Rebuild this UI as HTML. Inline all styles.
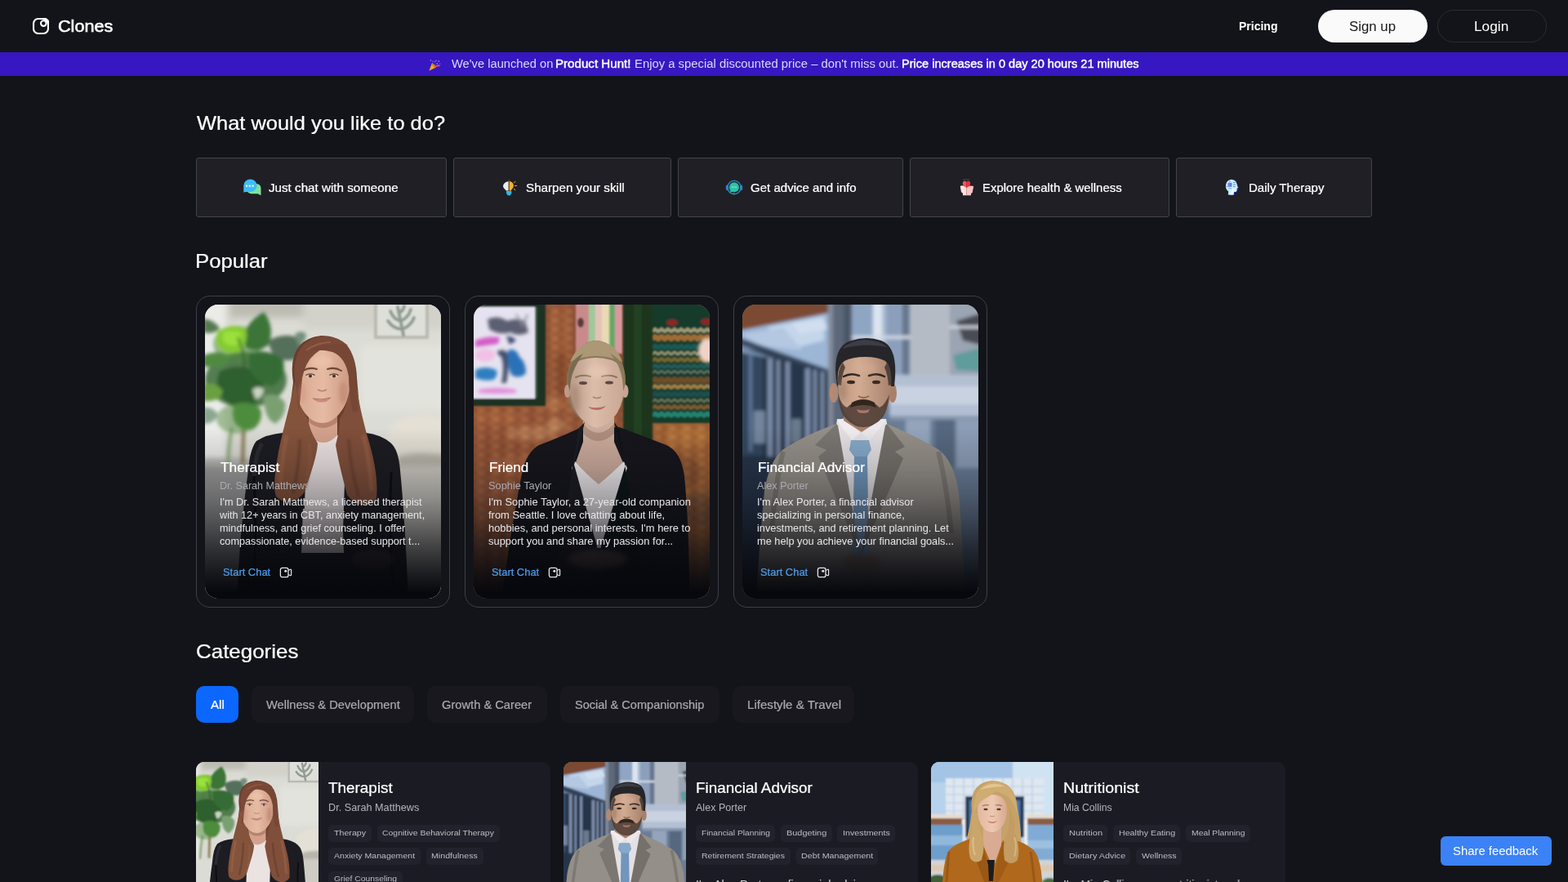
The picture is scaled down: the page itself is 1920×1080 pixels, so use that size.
<!DOCTYPE html>
<html lang="en">
<head>
<meta charset="utf-8">
<title>Clones</title>
<style>
*{box-sizing:border-box;margin:0;padding:0}
html,body{width:1920px;height:1080px;overflow:hidden;background:#131419;color:#fff;font-family:"Liberation Sans",sans-serif}
body{position:relative}
a{color:inherit;text-decoration:none}
button{font:inherit;color:inherit;border:0;background:none;display:block}
ul{list-style:none}
.t{position:absolute;white-space:nowrap;line-height:1;transform-origin:0 50%;font-weight:400;display:block;will-change:transform}
#nav{position:absolute;left:0;top:0;width:1920px;height:64px;background:#131419}
#logo{position:absolute;left:40px;top:22px;width:20px;height:20px}
.pill{position:absolute;top:12px;width:134px;height:40px;border-radius:20px;display:block}
#signup{left:1614px;background:#fafafa}
#login{left:1760px;border:1px solid #2b2b32}
#banner{position:absolute;left:0;top:64px;width:1920px;height:29px;background:#3617c1}
#banner .lt{color:#ddd6fb}
.h{color:#fff}
.act{position:absolute;top:193px;height:73px;border:1px solid #43444a;background:#201f26;border-radius:3px}
.ic{position:absolute}
.pc{position:absolute;top:362px;width:311px;height:382px;border:1px solid #3f4047;border-radius:17px;background:#131419}
.pc .img{position:absolute;left:10px;top:10px;width:289px;height:360px;border-radius:16px;overflow:hidden;background:#444}
.pc .img svg{position:absolute;left:0;top:0;width:289px;height:360px}
.pc .shade{position:absolute;left:0;top:0;width:289px;height:360px;background:linear-gradient(to bottom,rgba(7,8,13,0) 42%,rgba(7,8,13,.06) 47%,rgba(7,8,13,.14) 55%,rgba(7,8,13,.3) 65%,rgba(7,8,13,.48) 73%,rgba(7,8,13,.72) 83%,rgba(7,8,13,.9) 92%,rgba(7,8,13,1) 98%)}
.pc .role{color:#fff}
.pc .name{color:#a9aab0}
.pc .desc{line-height:16px;color:#e6e6e9}
.pc .start{color:#4f9cec}
.vid{position:absolute;width:16px;height:14px}
.tab{position:absolute;top:840px;height:45px;border-radius:10px;background:#18181e;color:#a9aab1}
.tab.on{background:#0b67fd;color:#fff}
.cc{position:absolute;top:933px;width:434px;height:216px;border-radius:10px;background:#1b1c23;overflow:hidden}
.cc .ph{position:absolute;left:0;top:0;width:150px;height:216px;overflow:hidden;background:#555}
.cc .ph svg{position:absolute;left:0;top:0;width:150px;height:216px}
.cc .role{color:#fff}
.cc .name{color:#b4b5bc}
.tag{position:absolute;height:20.400px;border-radius:5px;background:#21222b;color:#bcbdc4}
.cdesc{color:#d8d8dc}
#fb{position:absolute;left:1764px;top:1024px;width:136px;height:36px;border-radius:6px;background:#3b82f6;color:#fff}
.md{-webkit-text-stroke:.22px currentColor}
.cc .only-pop{display:none}
.sb{-webkit-text-stroke:.6px currentColor}
.sb2{-webkit-text-stroke:.4px currentColor}

</style>
</head>
<body>
<svg width="0" height="0" style="position:absolute" aria-hidden="true">
<defs>
<filter id="b05" x="-20%" y="-20%" width="140%" height="140%"><feGaussianBlur stdDeviation="0.5"/></filter>
<filter id="b1" x="-20%" y="-20%" width="140%" height="140%"><feGaussianBlur stdDeviation="1"/></filter>
<filter id="b2" x="-20%" y="-20%" width="140%" height="140%"><feGaussianBlur stdDeviation="2"/></filter>
<filter id="b3" x="-20%" y="-20%" width="140%" height="140%"><feGaussianBlur stdDeviation="3"/></filter>
<filter id="b5" x="-30%" y="-30%" width="160%" height="160%"><feGaussianBlur stdDeviation="5"/></filter>
<filter id="b8" x="-40%" y="-40%" width="180%" height="180%"><feGaussianBlur stdDeviation="8"/></filter>
<linearGradient id="hair1" x1="0" y1="0" x2="1" y2="0"><stop offset="0" stop-color="#6e4030"/><stop offset=".35" stop-color="#8f5a40"/><stop offset=".65" stop-color="#8a553c"/><stop offset="1" stop-color="#6a3e2f"/></linearGradient>
<linearGradient id="skin1" x1="0" y1="0" x2="1" y2="0"><stop offset="0" stop-color="#d9a78f"/><stop offset=".5" stop-color="#e6bba3"/><stop offset="1" stop-color="#cf9a84"/></linearGradient>
<linearGradient id="skin2" x1="0" y1="0" x2="1" y2="0"><stop offset="0" stop-color="#b89a88"/><stop offset=".45" stop-color="#dcbdaa"/><stop offset="1" stop-color="#c9a795"/></linearGradient>
<linearGradient id="skin3" x1="0" y1="0" x2="1" y2="0"><stop offset="0" stop-color="#c09880"/><stop offset=".4" stop-color="#d2ab92"/><stop offset="1" stop-color="#a8826c"/></linearGradient>
<linearGradient id="skin4" x1="0" y1="0" x2="1" y2="0"><stop offset="0" stop-color="#e2b89f"/><stop offset=".5" stop-color="#eec8b0"/><stop offset="1" stop-color="#d8a890"/></linearGradient>
<pattern id="brick" width="18" height="11" patternUnits="userSpaceOnUse"><rect width="18" height="11" fill="#7d4630"/><rect x="0.6" y="0.6" width="8" height="4.4" fill="#b06a42"/><rect x="9.6" y="0.6" width="8" height="4.4" fill="#95563a"/><rect x="5" y="6.100" width="8" height="4.400" fill="#c58658"/><rect x="14" y="6.100" width="8" height="4.400" fill="#8a4c30"/><rect x="-4" y="6.100" width="8" height="4.400" fill="#8a4c30"/></pattern>
</defs>
</svg>
<header id="nav">
<svg id="logo" viewBox="0 0 20 20" fill="none" stroke="#fff"><rect x="1.05" y="1.05" width="17.9" height="17.9" rx="5.6" stroke-width="2.1"/><path d="M13.4 1.05 A5.5 5.5 0 0 1 18.95 6.6" stroke-width="3.2"/><circle cx="13.3" cy="6.6" r="3.3" stroke-width="2.1"/></svg>
<a class="t sb" style="left:71.4px;top:22.27px;font-size:20px;transform:scaleX(1.08);">Clones</a>
<a class="t" style="left:1517.3px;top:24.95px;font-size:14px;font-weight:700;">Pricing</a>
<a id="signup" class="pill"><span class="t" style="left:37.9px;top:12.66px;font-size:16px;transform:scaleX(1.05);color:#18181b;">Sign up</span></a>
<a id="login" class="pill"><span class="t" style="left:44.1px;top:11.66px;font-size:16px;transform:scaleX(1.08);">Login</span></a>
</header>
<div id="banner">
<svg viewBox="0 0 18 18" style="position:absolute;left:524px;top:6px;width:18px;height:18px"><path d="M1.300 16.700 l3.700 -9.500 q3.500 1.200 5 5.300 z" fill="#f5a91e"/><path d="M5 7.200 q3.500 1.200 5 5.300 l-1.600 0.700 q-2 -3.200 -4 -4.400 z" fill="#c77a1a"/><path d="M9.500 11.200 q2.500 -1.200 5 -0.600" stroke="#e8566a" stroke-width="1.600" fill="none"/><path d="M8.300 6.200 q0.800 -1.800 2.600 -2.400" stroke="#b05ad8" stroke-width="1.200" fill="none"/><circle cx="3.400" cy="3.800" r="0.900" fill="#9a6cf0"/><circle cx="6" cy="5.300" r="0.800" fill="#5a7af0"/><circle cx="13.300" cy="5" r="0.900" fill="#6a8af8"/><circle cx="11.300" cy="8" r="0.900" fill="#5a8af0"/><circle cx="14.800" cy="8.300" r="0.700" fill="#7a6af0"/></svg>
<span class="t lt" style="left:552.5px;top:6.9px;font-size:14px;transform:scaleX(1.05);">We've launched on</span>
<b class="t sb2" style="left:680.3px;top:6.9px;font-size:14px;transform:scaleX(1.08);">Product Hunt!</b>
<span class="t lt" style="left:776.5px;top:6.9px;font-size:14px;transform:scaleX(1.06);">Enjoy a special discounted price – don't miss out.</span>
<b class="t sb2" style="left:1104px;top:6.9px;font-size:14px;transform:scaleX(1.04);">Price increases in 0 day 20 hours 21 minutes</b>
</div>
<main>
<h2 class="t md h" style="left:241.2px;top:138.88px;font-size:24px;transform:scaleX(1.06);">What would you like to do?</h2>
<div id="acts">
<button class="act" style="left:240px;width:307px"><svg class="ic" viewBox="0 0 22 21" style="left:57px;top:25px;width:22px;height:21px"><path d="M10 6 h6 a5.500 5.500 0 0 1 5.500 5.500 v8.700 l-3.800 -2 h-7.700 a6 6 0 0 1 0 -12.200 z" fill="#7fe29c"/><path d="M8.500 0.400 a8.200 7.800 0 0 1 0 15.600 h-5 l-3.200 0.600 v-8.400 a8.200 7.800 0 0 1 8.200 -7.800 z" fill="#3dbdf6"/><rect x="3" y="7.600" width="2.300" height="2" fill="#e8fbff"/><rect x="6.700" y="7.600" width="2.300" height="2" fill="#e8fbff"/><rect x="10.400" y="7.600" width="2.300" height="2" fill="#e8fbff"/></svg><span class="t md" style="left:88.2px;top:28.68px;font-size:14.2px;transform:scaleX(1.07);">Just chat with someone</span></button>
<button class="act" style="left:555px;width:267px"><svg class="ic" viewBox="0 0 22 21" style="left:56.5px;top:25px;width:22px;height:21px"><path d="M9.800 3 v11.500 h-3 q-1.500 -1.800 -3 -3.200 q-1.600 -2.400 0 -5 q2 -3 6 -3.300 z" fill="#eaeaf6"/><path d="M10.800 3 q4 0.400 5 4.200 q0.600 3 -1.600 5 q-1 1 -1.400 2.300 h-2 z" fill="#fbb12a"/><rect x="9.700" y="1.500" width="1.200" height="13" fill="#7a5a10"/><path d="M7 15 h6.400 v2.500 q-1 3 -3.200 3 q-2.200 0 -3.200 -3 z" fill="#35b4e8"/><path d="M16.500 4.500 l1.500 -1.200 M17.500 8.500 h2 M16.300 12.400 l1.600 1.200" stroke="#f3b23a" stroke-width="1" stroke-linecap="round"/></svg><span class="t md" style="left:87.7px;top:28.68px;font-size:14.2px;transform:scaleX(1.07);">Sharpen your skill</span></button>
<button class="act" style="left:830px;width:276px"><svg class="ic" viewBox="0 0 22 21" style="left:56.5px;top:25px;width:22px;height:21px"><circle cx="11" cy="10.500" r="8.200" fill="none" stroke="#2b80b4" stroke-width="1.600"/><rect x="0.800" y="7.500" width="3.400" height="6.500" rx="1.600" fill="#2f86c0"/><rect x="17.800" y="7.500" width="3.400" height="6.500" rx="1.600" fill="#2f86c0"/><circle cx="11" cy="10.200" r="6" fill="#2bc3a8"/><path d="M6.500 13.500 l-0.500 3.500 l4 -2 z" fill="#2bc3a8"/><circle cx="10.500" cy="18.300" r="1.300" fill="#2a8a8a"/><rect x="8.200" y="9.400" width="1.100" height="1.500" fill="#9ff5ea"/><rect x="10.400" y="9.400" width="1.100" height="1.500" fill="#9ff5ea"/><rect x="12.600" y="9.400" width="1.100" height="1.500" fill="#9ff5ea"/></svg><span class="t md" style="left:87.6px;top:28.68px;font-size:14.2px;transform:scaleX(1.06);">Get advice and info</span></button>
<button class="act" style="left:1114px;width:318px"><svg class="ic" viewBox="0 0 22 21" style="left:58px;top:25px;width:22px;height:21px"><path d="M3 10.500 q-1 -1.500 1 -2.200 l3.500 0.200 l3 1.500 v10.200 h-4.500 v-2.500 l-2 -1.500 z" fill="#fde0dc"/><path d="M18.300 8.800 q1.500 0.500 0.500 2.500 l-1.200 5.800 l-1.600 0.800 v2.300 h-5.500 v-10.200 l3.500 -1.600 z" fill="#fbc4c0"/><path d="M10.500 11.200 q-5 -3.500 -4.800 -6.300 q0.400 -2.600 2.800 -2.500 q1.300 0.200 2 1.500 z" fill="#f2575e"/><path d="M10.500 11.200 q5 -3.500 4.800 -6.300 q-0.400 -2.600 -2.800 -2.500 q-1.300 0.200 -2 1.500 z" fill="#fb2c36"/><rect x="6" y="0.600" width="8.500" height="0.700" fill="#5a5a66"/></svg><span class="t md" style="left:88.3px;top:28.68px;font-size:14.2px;transform:scaleX(1.05);">Explore health &amp; wellness</span></button>
<button class="act" style="left:1440px;width:240px"><svg class="ic" viewBox="0 0 22 21" style="left:56.5px;top:25px;width:22px;height:21px"><path d="M10.500 1.200 q6 0.200 7.200 6 q0.200 2 1.600 4.200 l-1.600 1 q0.400 3 -1 4 l-2.600 0.400 l-0.500 3.400 h-6.800 l0.400 -4 q-4 -3.500 -3.200 -8.200 q1 -6 6.500 -6.800 z" fill="#1d2590"/><path d="M9.500 0.800 q6 0.200 7.200 6 q0.200 2 1.400 4 l-1.400 1 q0.400 3 -1 4 l-2.600 0.200 l-0.500 3.600 h-6.800 l0.400 -4 q-4 -3.500 -3.200 -8.200 q1 -6 6.500 -6.600 z" fill="#c9ecfa"/><path d="M11 12 q3.500 -0.500 5 1.500 l-0.600 2 l-2.800 0.300 l-0.500 3.600 h-4 z" fill="#e8f6ee"/><rect x="5.500" y="4.800" width="5" height="5" rx="0.600" fill="#6c7cf2"/><path d="M12 4.500 h2.500 M12 7 h3 M12 9.500 h2.500 M3.500 9.500 h1.500 M7 11 v1.300 M9 11 v1.300 M8 2.500 v1.500" stroke="#4a90b8" stroke-width="0.900"/></svg><span class="t md" style="left:87.9px;top:28.68px;font-size:14.2px;transform:scaleX(1.06);">Daily Therapy</span></button>
</div>
<h2 class="t md h" style="left:239px;top:307.78px;font-size:24px;transform:scaleX(1.07);">Popular</h2>
<div id="popular">
<article class="pc" style="left:240px">
<div class="img"><svg viewBox="0 0 289 360" preserveAspectRatio="none"><rect width="289" height="360" fill="#dcdcd6"/>
<g filter="url(#b5)">
<rect x="-10" y="-10" width="36" height="210" fill="#ebebe8"/>
<rect x="26" y="-10" width="8" height="210" fill="#d3d3cc"/>
<rect x="30" y="-14" width="270" height="30" fill="#bcbcb2"/>
<rect x="120" y="-10" width="180" height="40" fill="#d2d2ca"/>
<rect x="190" y="50" width="110" height="80" fill="#e3e3dd"/>
</g>
<g filter="url(#b3)">
<path d="M226 152 q16 -18 40 -17 q20 1 30 8 v60 h-76 z" fill="#e4e0d5"/>
<path d="M212 190 h90 v180 h-90 z" fill="#cfccc4"/>
<path d="M236 186 q20 -8 60 -2 v14 h-60 z" fill="#b9b5ab"/>
</g>
<g class="only-pop" filter="url(#b3)">
<path d="M-10 193 h80 v180 h-80 z" fill="#9b9b9a"/>
<path d="M-10 188 h75 v10 h-75 z" fill="#b4b4b1"/>
</g>
<g filter="url(#b1)">
<rect x="207" y="-4" width="67" height="46" fill="#b9bab2"/>
<rect x="211" y="-1" width="59" height="39" fill="#dedfd9"/>
<g stroke="#909c93" stroke-width="4" fill="none" stroke-linecap="round">
<path d="M243 37 L236 3"/>
<path d="M241 30 q-10 0 -17 -10"/><path d="M239 20 q-8 -2 -12 -12"/>
<path d="M242 30 q10 -4 14 -14"/><path d="M240 20 q9 -4 12 -14"/><path d="M238 10 q5 -3 6 -8"/>
</g>
</g>
<g filter="url(#b2)">
<path d="M49 116 q-2 40 -3 80" stroke="#8b7b55" stroke-width="4.500" fill="none"/>
<path d="M33 150 q-4 20 -5 48" stroke="#7fa368" stroke-width="3.500" fill="none"/>
<ellipse cx="50" cy="92" rx="50" ry="34" fill="#3a6a36" opacity=".85"/>
<ellipse cx="40" cy="48" rx="30" ry="22" fill="#4a8a3c" opacity=".55"/>
<ellipse cx="40" cy="140" rx="26" ry="18" fill="#5a9048" opacity=".5"/>
<path d="M50 52 q-8 -26 22 -43 q14 18 6 40 q-14 12 -28 3 z" fill="#3d7538"/>
<path d="M-2 17 q14 2 20 12 q-6 8 -20 5 z" fill="#567a50"/>
<path d="M78 44 q18 -10 34 -4 q10 8 8 22 q-14 10 -30 4 q-12 -8 -12 -22 z" fill="#55705a"/>
<path d="M110 36 q8 -6 14 0 q0 10 -10 14 z" fill="#74907a"/>
<path d="M-2 62 q20 -8 34 2 q-4 14 -34 12 z" fill="#4f8a3f"/>
<path d="M18 82 q30 -14 52 6 q6 26 -14 36 q-26 4 -38 -14 q-6 -14 0 -28 z" fill="#2f5f2e"/>
<path d="M54 60 q24 -8 42 8 q4 22 -14 32 q-18 -4 -26 -18 q-4 -12 -2 -22 z" fill="#366c34"/>
<path d="M-2 98 q16 -4 24 8 q-4 14 -24 12 z" fill="#69a040"/>
<path d="M72 112 q16 -6 26 8 q2 16 -12 26 q-14 -6 -14 -34 z" fill="#7aa072"/>
<path d="M36 122 q18 -6 32 6 q4 14 -8 24 q-16 4 -24 -8 q-4 -12 0 -22 z" fill="#4e8c3c"/>
<path d="M-2 126 q10 -2 18 8 q-4 12 -18 12 z" fill="#8aa890"/>
<path d="M16 32 q18 -10 34 -2 q4 16 -8 28 q-18 4 -26 -8 q-4 -10 0 -18 z" fill="#84ca30"/>
<path d="M22 34 q12 -4 22 0 q2 8 -6 16 q-10 2 -16 -6 z" fill="#9be03c"/>
<path d="M40 40 q10 20 8 42" stroke="#2a5a2a" stroke-width="2" fill="none"/>
<path d="M58 104 q8 -6 14 0 q-2 10 -10 12 z" fill="#c8d4c0"/>
</g>
<g filter="url(#b05)">
<path d="M95 157 q-20 2 -32 10 q-8 10 -10 36 q-10 70 -14 160 h210 q-4 -100 -10 -160 q-2 -26 -12 -34 q-12 -10 -30 -12 l-30 -4 h-40 z" fill="#1c1c20"/>
<path d="M70 170 q-8 12 -10 40" stroke="#2c2c31" stroke-width="5" fill="none"/>
<path d="M60 210 q4 80 -2 150" stroke="#0f0f12" stroke-width="3" fill="none"/>
<path d="M228 205 q-4 80 4 155" stroke="#0f0f12" stroke-width="3" fill="none"/>
<path d="M128 158 h38 l6 30 q-2 60 -4 116 h-48 q2 -60 4 -116 z" fill="#ebe2e2"/>
<path d="M120 250 l-2 54 h52 l-2 -54 z" fill="#e3dada"/>
<path d="M108 95 q-8 -52 34 -57 q42 0 44 52 l6 70 h-92 z" fill="#6b3e2f"/>
<path d="M127 126 h35 v34 q-17 18 -35 0 z" fill="#d4a28c"/>
<path d="M127 134 q17 20 35 0 v10 q-17 14 -35 0 z" fill="#b07c66" opacity=".8"/>
<path d="M110 95 C104 125 96 150 90 180 C86 205 83 222 87 235 C98 246 114 242 122 229 C130 205 137 186 138 170 C132 160 128 152 126 140 C120 130 114 115 112 95 Z" fill="#84523b"/>
<path d="M184 90 C188 120 194 145 202 172 C208 195 212 215 210 237 C200 250 184 247 174 233 C168 210 163 190 160 172 C163 160 165 150 165 140 C172 130 176 115 177 95 Z" fill="#80503a"/>
<path d="M112 88 q0 -28 30 -33 q32 0 35 33 q2 20 -6 36 q-8 14 -18 19 q-9 4 -19 0 q-10 -5 -17 -19 q-7 -16 -5 -36 z" fill="url(#skin1)"/>
<path d="M111 100 q-8 -50 26 -60 q22 -4 38 10 q-26 -2 -40 10 q-12 10 -16 30 q-2 24 -4 40 z" fill="#7a4937"/>
<path d="M126 57 q22 -12 48 -7 q10 12 11 40 q1 26 3 40 l-7 2 q-5 -26 -5 -44 q-4 -24 -20 -30 q-14 -4 -30 -1 z" fill="#774634"/>
<path d="M124 56 q14 -10 30 -10" stroke="#a06c50" stroke-width="2" fill="none" opacity=".6"/>
</g>
<g filter="url(#b1)">
<path d="M100 160 q-6 30 -8 64" stroke="#9c6548" stroke-width="5" fill="none" opacity=".55"/>
<path d="M194 160 q8 34 10 68" stroke="#9c6548" stroke-width="5" fill="none" opacity=".55"/>
<path d="M116 165 q0 30 -8 66" stroke="#5e3527" stroke-width="4" fill="none" opacity=".5"/>
<path d="M176 165 q2 34 12 70" stroke="#5e3527" stroke-width="4" fill="none" opacity=".5"/>
<path d="M128 170 q2 30 -6 56" stroke="#8f5a42" stroke-width="4" fill="none" opacity=".6"/>
</g>
<g filter="url(#b05)">
<path d="M120 81 q8 -5 17 -2" stroke="#6a4636" stroke-width="2" fill="none" stroke-linecap="round"/>
<path d="M150 79 q9 -3 17 2" stroke="#6a4636" stroke-width="2" fill="none" stroke-linecap="round"/>
<ellipse cx="129" cy="87.500" rx="4.500" ry="2" fill="#e0c8bc"/><circle cx="129" cy="87.500" r="2.100" fill="#4f3828"/>
<ellipse cx="158" cy="87.500" rx="4.500" ry="2" fill="#e0c8bc"/><circle cx="158" cy="87.500" r="2.100" fill="#4f3828"/>
<path d="M123.500 86.500 q5.500 -3.500 11 0" stroke="#4a3028" stroke-width="1.100" fill="none"/>
<path d="M152.500 86.500 q5.500 -3.500 11 0" stroke="#4a3028" stroke-width="1.100" fill="none"/>
<path d="M138 104 q5.500 3.500 11 0" stroke="#b88270" stroke-width="1.500" fill="none"/>
<path d="M132 115 q11 4 22 -1 q-4 5.500 -11 5.500 q-7 0 -11 -4.500 z" fill="#c98680"/>
<path d="M132 115 q11 2.500 22 -1" stroke="#a86a64" stroke-width="1" fill="none"/>
</g>
<g filter="url(#b2)">
<ellipse cx="120" cy="108" rx="5" ry="12" fill="#c99078" opacity=".35"/>
<ellipse cx="169" cy="108" rx="5" ry="14" fill="#b87a66" opacity=".45"/>
<ellipse cx="143" cy="70" rx="14" ry="7" fill="#f0c8b0" opacity=".5"/>
<ellipse cx="206" cy="312" rx="26" ry="12" fill="#4a3c3a" opacity=".6"/>
</g></svg><div class="shade"></div></div>
<h3 class="t md role" style="left:28.5px;top:201.29px;font-size:16.2px;transform:scaleX(1.07);">Therapist</h3>
<p class="t name" style="left:28px;top:226.27px;font-size:12.2px;transform:scaleX(1.03);">Dr. Sarah Matthews</p>
<p class="t desc" style="left:28px;top:243.57px;font-size:12.2px;transform:scaleX(1.04);">I'm Dr. Sarah Matthews, a licensed therapist<br>with 12+ years in CBT, anxiety management,<br>mindfulness, and grief counseling. I offer<br>compassionate, evidence-based support t...</p>
<a class="t md start" style="left:32px;top:331.87px;font-size:12.2px;transform:scaleX(1.06);">Start Chat</a>
<svg class="vid" style="left:101px;top:330.5px" viewBox="0 0 16 14" fill="none"><rect x="1.400" y="1.400" width="9.600" height="11.200" rx="2.200" stroke="#e4e4e7" stroke-width="1.300"/><circle cx="7.800" cy="5.200" r="1.500" fill="#e4e4e7"/><path d="M11.200 4.600 l2.200 -1.300 q1.100 -0.300 1.200 0.800 v5.800 q-0.100 1.100 -1.200 0.800 l-2.200 -1.300" stroke="#e4e4e7" stroke-width="1.200" stroke-linejoin="round"/></svg>
</article>
<article class="pc" style="left:569px">
<div class="img"><svg viewBox="0 0 289 360" preserveAspectRatio="none"><rect width="289" height="360" fill="#8d5033"/>
<g filter="url(#b3)">
<ellipse cx="105" cy="30" rx="12" ry="30" fill="#a4623a"/>
<ellipse cx="108" cy="85" rx="12" ry="26" fill="#7a4226"/>
<ellipse cx="98" cy="122" rx="14" ry="9" fill="#b87a4c"/>
<ellipse cx="30" cy="138" rx="30" ry="9" fill="#a8623a"/>
<ellipse cx="70" cy="158" rx="30" ry="9" fill="#c08a60"/>
<ellipse cx="20" cy="172" rx="28" ry="9" fill="#8a4e30"/>
<ellipse cx="60" cy="196" rx="40" ry="12" fill="#a86440"/>
<ellipse cx="20" cy="226" rx="30" ry="12" fill="#94563a"/>
<ellipse cx="100" cy="148" rx="12" ry="9" fill="#c89468"/>
<ellipse cx="40" cy="260" rx="40" ry="14" fill="#9a5c3c"/>
<rect x="222" y="142" width="70" height="230" fill="#a4662f"/>
<ellipse cx="262" cy="162" rx="28" ry="12" fill="#c08238"/>
<ellipse cx="250" cy="205" rx="30" ry="20" fill="#7a4c28"/>
<ellipse cx="275" cy="250" rx="20" ry="20" fill="#6a5030"/>
</g>
<g filter="url(#b2)" opacity=".5"><rect x="-9" y="-6" width="310" height="380" fill="url(#brick)"/></g>
<g filter="url(#b1)">
<rect x="-5" y="-5" width="93" height="129" fill="#1c3322"/>
<rect x="-5" y="3" width="80" height="112" fill="#e6e3f0"/>
<rect x="75" y="3" width="3" height="112" fill="#3c5a44"/>
</g>
<g filter="url(#b2)">
<path d="M17 18 q12 -6 24 2 q10 -4 22 0 l4 14 q-12 6 -22 0 q-14 4 -26 -4 z" fill="#5b5e72"/>
<path d="M52 12 l8 14 l6 -14" stroke="#8a8a98" stroke-width="2" fill="none"/>
<path d="M2 44 q14 -6 30 -4 l-2 8 q-14 2 -28 4 z" fill="#d45cc8"/>
<ellipse cx="14" cy="62" rx="12" ry="8" fill="#f2c0e4"/>
<path d="M40 38 q10 2 12 6 l-8 5 z" fill="#3a4a70"/>
<path d="M28 58 q8 -6 14 2 q2 16 -2 36 l-6 0 q4 -20 0 -32 q-4 -2 -6 -6 z" fill="#44506a"/>
<path d="M42 56 q10 -4 14 8 q8 6 8 20 q-8 8 -18 2 q-6 -14 -4 -30 z" fill="#2a72b8"/>
<path d="M2 80 q12 -6 26 0 q2 8 -4 12 q-12 2 -22 -2 z" fill="#2f7fc0"/>
<path d="M6 104 q22 -4 46 0 l0 4 q-24 2 -46 0 z" fill="#e48cdc"/>
</g>
<g filter="url(#b1)">
<rect x="125" y="-5" width="16" height="65" fill="#c98a8c"/>
<rect x="141" y="-5" width="8" height="65" fill="#a0c89a"/>
<rect x="149" y="-5" width="8" height="65" fill="#e4c2ba"/>
<rect x="157" y="-5" width="9" height="65" fill="#eadab2"/>
<rect x="166" y="-5" width="7" height="65" fill="#66a868"/>
<rect x="173" y="-5" width="9" height="65" fill="#d8989f"/>
<ellipse cx="131" cy="22" rx="4" ry="6" fill="#5a3a3a"/>
</g>
<g filter="url(#b1)">
<rect x="217" y="-5" width="80" height="150" fill="#173a2b"/>
<ellipse cx="243" cy="22" rx="7" ry="4" fill="#8a2828"/><ellipse cx="285" cy="21" rx="7" ry="4" fill="#8a2828"/>
<g fill="none" stroke-linejoin="round" opacity=".8">
<path d="M218 33 l4 -3 l4 3 l4 -3 l4 3 l4 -3 l4 3 l4 -3 l4 3 l4 -3 l4 3 l4 -3 l4 3 l4 -3 l4 3 l4 -3 l4 3 l4 -3 l4 3" stroke="#c2b48c" stroke-width="4"/>
<path d="M218 42 l4 -3 l4 3 l4 -3 l4 3 l4 -3 l4 3 l4 -3 l4 3 l4 -3 l4 3 l4 -3 l4 3 l4 -3 l4 3 l4 -3 l4 3 l4 -3 l4 3" stroke="#c07a38" stroke-width="6"/>
<path d="M218 53 l4 -3 l4 3 l4 -3 l4 3 l4 -3 l4 3 l4 -3 l4 3 l4 -3 l4 3 l4 -3 l4 3 l4 -3 l4 3 l4 -3 l4 3 l4 -3 l4 3" stroke="#1f6060" stroke-width="5"/>
<path d="M218 61 l4 -3 l4 3 l4 -3 l4 3 l4 -3 l4 3 l4 -3 l4 3 l4 -3 l4 3 l4 -3 l4 3 l4 -3 l4 3 l4 -3 l4 3 l4 -3 l4 3" stroke="#b0a884" stroke-width="3"/>
<path d="M218 69 l4 -3 l4 3 l4 -3 l4 3 l4 -3 l4 3 l4 -3 l4 3 l4 -3 l4 3 l4 -3 l4 3 l4 -3 l4 3 l4 -3 l4 3 l4 -3 l4 3" stroke="#8f7236" stroke-width="4"/>
<path d="M218 77 l4 -3 l4 3 l4 -3 l4 3 l4 -3 l4 3 l4 -3 l4 3 l4 -3 l4 3 l4 -3 l4 3 l4 -3 l4 3 l4 -3 l4 3 l4 -3 l4 3" stroke="#256464" stroke-width="4"/>
<path d="M218 84 l4 -3 l4 3 l4 -3 l4 3 l4 -3 l4 3 l4 -3 l4 3 l4 -3 l4 3 l4 -3 l4 3 l4 -3 l4 3 l4 -3 l4 3 l4 -3 l4 3" stroke="#6f8070" stroke-width="2.500"/>
<path d="M218 94 l4 -3 l4 3 l4 -3 l4 3 l4 -3 l4 3 l4 -3 l4 3 l4 -3 l4 3 l4 -3 l4 3 l4 -3 l4 3 l4 -3 l4 3 l4 -3 l4 3" stroke="#84542a" stroke-width="6"/>
<path d="M218 102 l4 -3 l4 3 l4 -3 l4 3 l4 -3 l4 3 l4 -3 l4 3 l4 -3 l4 3 l4 -3 l4 3 l4 -3 l4 3 l4 -3 l4 3 l4 -3 l4 3" stroke="#c09252" stroke-width="4"/>
<path d="M218 111 l4 -3 l4 3 l4 -3 l4 3 l4 -3 l4 3 l4 -3 l4 3 l4 -3 l4 3 l4 -3 l4 3 l4 -3 l4 3 l4 -3 l4 3 l4 -3 l4 3" stroke="#1d5656" stroke-width="5"/>
<path d="M218 119 l4 -3 l4 3 l4 -3 l4 3 l4 -3 l4 3 l4 -3 l4 3 l4 -3 l4 3 l4 -3 l4 3 l4 -3 l4 3 l4 -3 l4 3 l4 -3 l4 3" stroke="#808464" stroke-width="2.500"/>
<path d="M218 127 l4 -3 l4 3 l4 -3 l4 3 l4 -3 l4 3 l4 -3 l4 3 l4 -3 l4 3 l4 -3 l4 3 l4 -3 l4 3 l4 -3 l4 3 l4 -3 l4 3" stroke="#986436" stroke-width="4"/>
<path d="M218 136 l4 -3 l4 3 l4 -3 l4 3 l4 -3 l4 3 l4 -3 l4 3 l4 -3 l4 3 l4 -3 l4 3 l4 -3 l4 3 l4 -3 l4 3 l4 -3 l4 3" stroke="#289482" stroke-width="5"/>
</g>
</g>
<g filter="url(#b1)">
<rect x="183" y="-5" width="36" height="380" fill="#1d361a"/>
<rect x="196" y="-5" width="10" height="380" fill="#274423" opacity=".8"/>
</g>
<g filter="url(#b2)"><ellipse cx="286" cy="56" rx="11" ry="15" fill="#f0d2c8"/></g>
<g filter="url(#b05)">
<path d="M128 152 q-26 12 -48 20 q-14 8 -20 30 q-12 60 -26 158 h230 q0 -90 -6 -150 q-4 -30 -22 -38 q-26 -10 -58 -22 z" fill="#14151a"/>
<path d="M134 138 h38 v30 l12 28 l-31 34 l-29 -34 l10 -28 z" fill="#cbab9b"/>
<path d="M134 146 q18 22 38 0 v12 q-20 18 -38 0 z" fill="#a48474" opacity=".75"/>
<path d="M124 192 q14 16 29 28 q15 -12 31 -28 l4 8 l-32 98 h-6 l-30 -98 z" fill="#efebed"/>
<path d="M128 152 l8 -8 l-13 52 l28 100 l-5 64 h-50 z" fill="#1b1c22"/>
<path d="M178 152 l-6 -8 l14 52 l-30 100 l6 64 h50 z" fill="#111217"/>
<ellipse cx="150" cy="96" rx="36" ry="52" fill="#8a7858"/>
<path d="M118 70 q10 -24 32 -26 q24 2 32 26 q-32 -14 -64 0 z" fill="#ac9874"/>
<ellipse cx="115" cy="106" rx="4" ry="8" fill="#c09c8a"/><ellipse cx="185.500" cy="106" rx="4" ry="8" fill="#c8a492"/>
<path d="M117 98 q-2 -24 14 -30 q18 -6 38 0 q16 6 15 30 q0 20 -8 34 q-10 16 -25 19 q-15 -3 -25 -19 q-8 -14 -9 -34 z" fill="url(#skin2)"/>
<path d="M116 100 q-4 -30 18 -40 q-8 12 -12 22 q-4 10 -4 24 z" fill="#7a6a50"/>
<path d="M185 100 q4 -30 -18 -40 q10 12 12 20 q4 10 4 26 z" fill="#8a7a5c"/>
</g>
<g filter="url(#b05)">
<path d="M125 89 q8 -4 18 -1" stroke="#8a7460" stroke-width="2" fill="none" stroke-linecap="round"/>
<path d="M157 88 q10 -3 18 1" stroke="#8a7460" stroke-width="2" fill="none" stroke-linecap="round"/>
<ellipse cx="134" cy="96" rx="5" ry="2" fill="#5a4a44"/><ellipse cx="166" cy="95.500" rx="5" ry="2" fill="#5a4a44"/>
<path d="M146 113 q5 3 10 0" stroke="#a88474" stroke-width="1.500" fill="none"/>
<path d="M140 125 q11 3 22 -1 q-4 5 -11 5 q-7 0 -11 -4 z" fill="#b86a68"/>
</g>
<g filter="url(#b3)">
<ellipse cx="124" cy="116" rx="6" ry="18" fill="#a08070" opacity=".6"/>
<ellipse cx="152" cy="82" rx="14" ry="8" fill="#e8ccb8" opacity=".6"/>
<ellipse cx="152" cy="312" rx="36" ry="12" fill="#8a6a5c" opacity=".6"/>
</g></svg><div class="shade"></div></div>
<h3 class="t md role" style="left:28.5px;top:201.29px;font-size:16.2px;transform:scaleX(1.05);">Friend</h3>
<p class="t name" style="left:28px;top:226.27px;font-size:12.2px;transform:scaleX(1.05);">Sophie Taylor</p>
<p class="t desc" style="left:28px;top:243.57px;font-size:12.2px;transform:scaleX(1.06);">I'm Sophie Taylor, a 27-year-old companion<br>from Seattle. I love chatting about life,<br>hobbies, and personal interests. I'm here to<br>support you and share my passion for...</p>
<a class="t md start" style="left:32px;top:331.87px;font-size:12.2px;transform:scaleX(1.06);">Start Chat</a>
<svg class="vid" style="left:101px;top:330.5px" viewBox="0 0 16 14" fill="none"><rect x="1.400" y="1.400" width="9.600" height="11.200" rx="2.200" stroke="#e4e4e7" stroke-width="1.300"/><circle cx="7.800" cy="5.200" r="1.500" fill="#e4e4e7"/><path d="M11.200 4.600 l2.200 -1.300 q1.100 -0.300 1.200 0.800 v5.800 q-0.100 1.100 -1.200 0.800 l-2.200 -1.300" stroke="#e4e4e7" stroke-width="1.200" stroke-linejoin="round"/></svg>
</article>
<article class="pc" style="left:898px">
<div class="img"><svg viewBox="0 0 289 360" preserveAspectRatio="none"><rect width="289" height="360" fill="#6a7d98"/>
<g filter="url(#b2)">

<rect x="-5" y="55" width="112" height="320" fill="#273549"/>
<rect x="-5" y="55" width="30" height="130" fill="#33465f"/>

<path d="M-5 30 L107 8 L107 80 L-5 44 z" fill="#9db6d6"/>
<path d="M30 28 L100 14 L100 44 L60 54 z" fill="#c4d6ea"/>
<path d="M0 36 L50 28 L74 56 L20 50 z" fill="#b4c8e2"/>
<path d="M60 22 L100 18 L104 30 L70 36 z" fill="#d0deef"/>
<path d="M-5 40 L107 80 L107 86 L-5 47 z" fill="#34445c"/>
<path d="M-5 52 L40 66 L60 70 L-5 58 z" fill="#7f98b8"/>

<path d="M-5 -5 L107 -5 L107 10 L-5 32 z" fill="#7c4a33"/>

<g fill="#7f90ad">
<rect x="31" y="66" width="6" height="120"/><rect x="42" y="68" width="4" height="120"/><rect x="53" y="70" width="5" height="120"/>
<rect x="77" y="78" width="6" height="110"/><rect x="87" y="80" width="4" height="110"/><rect x="96" y="82" width="4" height="110"/>
<rect x="8" y="60" width="4" height="120" fill="#5f7698"/>
</g>
<rect x="14" y="130" width="14" height="40" fill="#9fb0c8" opacity=".6"/>
<rect x="60" y="140" width="12" height="30" fill="#b0bfd4" opacity=".5"/>

<rect x="105" y="-5" width="29" height="200" fill="#5d6879"/>
<rect x="105" y="-5" width="6" height="200" fill="#828c9c"/>
<rect x="124" y="-5" width="10" height="200" fill="#4c5666"/>

<rect x="134" y="-5" width="72" height="100" fill="#a9bbd2"/>
<rect x="134" y="-5" width="26" height="60" fill="#8ea6c4"/>
<rect x="160" y="-5" width="11" height="100" fill="#dce4ee"/>
<rect x="176" y="-5" width="18" height="100" fill="#8b9fbc"/>
<rect x="195" y="-5" width="10" height="100" fill="#66778e"/>
<rect x="134" y="38" width="72" height="4" fill="#d0d8e4"/>

<rect x="206" y="-5" width="50" height="92" fill="#b5bbc5"/>
<rect x="254" y="-5" width="40" height="92" fill="#9aa4b2"/>
<path d="M262 20 L294 10 L294 50 L270 44 z" fill="#4a4c55"/>
<path d="M258 62 L294 52 L294 82 L262 80 z" fill="#5e9c9c"/>
<rect x="254" y="26" width="40" height="3" fill="#d8dee6"/>

<rect x="180" y="86" width="114" height="50" fill="#b3bfd3"/>
<rect x="180" y="100" width="114" height="22" fill="#c9d2e0"/>

<rect x="180" y="136" width="114" height="240" fill="#6b7d96"/>
<rect x="200" y="140" width="30" height="60" fill="#93a4bc"/>
<rect x="236" y="140" width="24" height="60" fill="#56677f"/>
<rect x="262" y="140" width="30" height="60" fill="#8c9db6"/>
<rect x="180" y="136" width="114" height="5" fill="#8797ae"/>
</g>

<g filter="url(#b05)">
<path d="M115 146 q-40 14 -66 32 q-16 14 -22 50 q-6 60 -10 132 h256 q-4 -80 -8 -130 q-6 -38 -24 -52 q-30 -18 -64 -32 z" fill="#948f88"/>
<path d="M50 180 q-10 40 -14 100" stroke="#6f6b66" stroke-width="6" fill="none" opacity=".6"/>
<path d="M240 180 q10 40 16 100" stroke="#6f6b66" stroke-width="6" fill="none" opacity=".6"/>

<path d="M116 140 l60 0 l6 30 l-36 136 l-34 -136 z" fill="#e4e0e3"/>

<path d="M135 166 l18 0 l4 12 l-4 8 l2 120 l-10 12 l-10 -12 l2 -120 l-6 -8 z" fill="#7196bb"/>
<path d="M133 166 l22 0 l3 12 l-6 8 l-14 0 l-7 -8 z" fill="#86a9c9"/>

<path d="M115 146 l-26 26 l14 6 l-10 8 l52 122 l-28 -160 z" fill="#7a7671"/>
<path d="M177 146 l22 28 l-12 6 l10 8 l-52 120 l30 -160 z" fill="#74706b"/>

<path d="M116 142 l18 24 l10 -8 l-16 -20 z" fill="#f0ecee"/>
<path d="M176 142 l-20 24 l-10 -8 l18 -20 z" fill="#ebe7ea"/>

<path d="M124 128 h44 v14 l-22 14 l-22 -14 z" fill="#a47e68"/>

<ellipse cx="112" cy="108" rx="5.500" ry="12" fill="#b38a74"/><ellipse cx="184" cy="108" rx="5" ry="12" fill="#a8806a"/>

<path d="M116 100 q-8 -50 18 -56 q18 -6 36 0 q22 8 16 56 z" fill="#27282c"/>
<path d="M122 54 q10 -10 28 -11 q18 1 28 9 q-28 -6 -56 2 z" fill="#3d3e44"/>
<path d="M117 96 q-2 -20 8 -27 q10 -5 26 -5 q14 0 24 5 q8 7 7 27 q0 22 -6 34 q-10 16 -26 19 q-16 -3 -26 -19 q-6 -12 -7 -34 z" fill="url(#skin3)"/>
<path d="M117 98 q-1 -18 6 -27 l3 6 q-4 8 -5 22 z" fill="#3a3230" opacity=".8"/>
<path d="M183 98 q1 -18 -6 -27 l-3 6 q4 8 5 22 z" fill="#3a3230" opacity=".8"/>
<path d="M117 110 q2 22 10 30 q10 10 21 10 q12 0 22 -10 q8 -8 10 -30 q-6 14 -12 16 q-8 -8 -20 -8 q-12 0 -20 8 q-6 -2 -11 -16 z" fill="#4a3a33" opacity=".85"/>
<path d="M134 120 q14 -8 28 0 l2 6 q-16 -6 -32 0 z" fill="#33261f"/>
<path d="M140 128 q8 3 16 0 l-2 4 q-6 2 -12 0 z" fill="#a8786a"/>
</g>
<g filter="url(#b05)">
<path d="M124 88 q9 -5 19 -1" stroke="#2c2420" stroke-width="2.500" fill="none" stroke-linecap="round"/>
<path d="M155 87 q10 -4 19 1" stroke="#2c2420" stroke-width="2.500" fill="none" stroke-linecap="round"/>
<ellipse cx="133" cy="95" rx="5" ry="2.200" fill="#3a2a24"/><ellipse cx="164" cy="95" rx="5" ry="2.200" fill="#3a2a24"/>
<path d="M142 112 q6 4 13 0" stroke="#8a6450" stroke-width="1.800" fill="none"/>
</g>
<g filter="url(#b3)">
<ellipse cx="123" cy="105" rx="5" ry="12" fill="#9a7560" opacity=".5"/>
<ellipse cx="150" cy="78" rx="16" ry="7" fill="#d8b098" opacity=".5"/>
<ellipse cx="146" cy="316" rx="24" ry="12" fill="#8a6a58" opacity=".7"/>
</g></svg><div class="shade"></div></div>
<h3 class="t md role" style="left:28.5px;top:201.29px;font-size:16.2px;transform:scaleX(1.07);">Financial Advisor</h3>
<p class="t name" style="left:28px;top:226.27px;font-size:12.2px;transform:scaleX(1.04);">Alex Porter</p>
<p class="t desc" style="left:28px;top:243.57px;font-size:12.2px;transform:scaleX(1.05);">I'm Alex Porter, a financial advisor<br>specializing in personal finance,<br>investments, and retirement planning. Let<br>me help you achieve your financial goals...</p>
<a class="t md start" style="left:32px;top:331.87px;font-size:12.2px;transform:scaleX(1.06);">Start Chat</a>
<svg class="vid" style="left:101px;top:330.5px" viewBox="0 0 16 14" fill="none"><rect x="1.400" y="1.400" width="9.600" height="11.200" rx="2.200" stroke="#e4e4e7" stroke-width="1.300"/><circle cx="7.800" cy="5.200" r="1.500" fill="#e4e4e7"/><path d="M11.200 4.600 l2.200 -1.300 q1.100 -0.300 1.200 0.800 v5.800 q-0.100 1.100 -1.200 0.800 l-2.200 -1.300" stroke="#e4e4e7" stroke-width="1.200" stroke-linejoin="round"/></svg>
</article>
</div>
<h2 class="t md h" style="left:240px;top:785.78px;font-size:24px;transform:scaleX(1.08);">Categories</h2>
<nav id="tabs">
<button class="tab on" style="left:240px;width:52px"><span class="t md" style="left:17.5px;top:16.11px;font-size:14.4px;transform:scaleX(1.05);">All</span></button>
<button class="tab" style="left:308px;width:199px"><span class="t md" style="left:17.8px;top:16.11px;font-size:14.4px;transform:scaleX(1.02);">Wellness &amp; Development</span></button>
<button class="tab" style="left:523px;width:147px"><span class="t md" style="left:18.2px;top:16.11px;font-size:14.4px;transform:scaleX(1.02);">Growth &amp; Career</span></button>
<button class="tab" style="left:686px;width:195px"><span class="t md" style="left:18px;top:16.11px;font-size:14.4px;transform:scaleX(1.01);">Social &amp; Companionship</span></button>
<button class="tab" style="left:897px;width:149px"><span class="t md" style="left:17.7px;top:16.11px;font-size:14.4px;transform:scaleX(1.05);">Lifestyle &amp; Travel</span></button>
</nav>
<div id="cats">
<article class="cc" style="left:240px">
<div class="ph"><svg viewBox="19.5 0 250 360" preserveAspectRatio="none"><rect width="289" height="360" fill="#dcdcd6"/>
<g filter="url(#b5)">
<rect x="-10" y="-10" width="36" height="210" fill="#ebebe8"/>
<rect x="26" y="-10" width="8" height="210" fill="#d3d3cc"/>
<rect x="30" y="-14" width="270" height="30" fill="#bcbcb2"/>
<rect x="120" y="-10" width="180" height="40" fill="#d2d2ca"/>
<rect x="190" y="50" width="110" height="80" fill="#e3e3dd"/>
</g>
<g filter="url(#b3)">
<path d="M226 152 q16 -18 40 -17 q20 1 30 8 v60 h-76 z" fill="#e4e0d5"/>
<path d="M212 190 h90 v180 h-90 z" fill="#cfccc4"/>
<path d="M236 186 q20 -8 60 -2 v14 h-60 z" fill="#b9b5ab"/>
</g>
<g class="only-pop" filter="url(#b3)">
<path d="M-10 193 h80 v180 h-80 z" fill="#9b9b9a"/>
<path d="M-10 188 h75 v10 h-75 z" fill="#b4b4b1"/>
</g>
<g filter="url(#b1)">
<rect x="207" y="-4" width="67" height="46" fill="#b9bab2"/>
<rect x="211" y="-1" width="59" height="39" fill="#dedfd9"/>
<g stroke="#909c93" stroke-width="4" fill="none" stroke-linecap="round">
<path d="M243 37 L236 3"/>
<path d="M241 30 q-10 0 -17 -10"/><path d="M239 20 q-8 -2 -12 -12"/>
<path d="M242 30 q10 -4 14 -14"/><path d="M240 20 q9 -4 12 -14"/><path d="M238 10 q5 -3 6 -8"/>
</g>
</g>
<g filter="url(#b2)">
<path d="M49 116 q-2 40 -3 80" stroke="#8b7b55" stroke-width="4.500" fill="none"/>
<path d="M33 150 q-4 20 -5 48" stroke="#7fa368" stroke-width="3.500" fill="none"/>
<ellipse cx="50" cy="92" rx="50" ry="34" fill="#3a6a36" opacity=".85"/>
<ellipse cx="40" cy="48" rx="30" ry="22" fill="#4a8a3c" opacity=".55"/>
<ellipse cx="40" cy="140" rx="26" ry="18" fill="#5a9048" opacity=".5"/>
<path d="M50 52 q-8 -26 22 -43 q14 18 6 40 q-14 12 -28 3 z" fill="#3d7538"/>
<path d="M-2 17 q14 2 20 12 q-6 8 -20 5 z" fill="#567a50"/>
<path d="M78 44 q18 -10 34 -4 q10 8 8 22 q-14 10 -30 4 q-12 -8 -12 -22 z" fill="#55705a"/>
<path d="M110 36 q8 -6 14 0 q0 10 -10 14 z" fill="#74907a"/>
<path d="M-2 62 q20 -8 34 2 q-4 14 -34 12 z" fill="#4f8a3f"/>
<path d="M18 82 q30 -14 52 6 q6 26 -14 36 q-26 4 -38 -14 q-6 -14 0 -28 z" fill="#2f5f2e"/>
<path d="M54 60 q24 -8 42 8 q4 22 -14 32 q-18 -4 -26 -18 q-4 -12 -2 -22 z" fill="#366c34"/>
<path d="M-2 98 q16 -4 24 8 q-4 14 -24 12 z" fill="#69a040"/>
<path d="M72 112 q16 -6 26 8 q2 16 -12 26 q-14 -6 -14 -34 z" fill="#7aa072"/>
<path d="M36 122 q18 -6 32 6 q4 14 -8 24 q-16 4 -24 -8 q-4 -12 0 -22 z" fill="#4e8c3c"/>
<path d="M-2 126 q10 -2 18 8 q-4 12 -18 12 z" fill="#8aa890"/>
<path d="M16 32 q18 -10 34 -2 q4 16 -8 28 q-18 4 -26 -8 q-4 -10 0 -18 z" fill="#84ca30"/>
<path d="M22 34 q12 -4 22 0 q2 8 -6 16 q-10 2 -16 -6 z" fill="#9be03c"/>
<path d="M40 40 q10 20 8 42" stroke="#2a5a2a" stroke-width="2" fill="none"/>
<path d="M58 104 q8 -6 14 0 q-2 10 -10 12 z" fill="#c8d4c0"/>
</g>
<g filter="url(#b05)">
<path d="M95 157 q-20 2 -32 10 q-8 10 -10 36 q-10 70 -14 160 h210 q-4 -100 -10 -160 q-2 -26 -12 -34 q-12 -10 -30 -12 l-30 -4 h-40 z" fill="#1c1c20"/>
<path d="M70 170 q-8 12 -10 40" stroke="#2c2c31" stroke-width="5" fill="none"/>
<path d="M60 210 q4 80 -2 150" stroke="#0f0f12" stroke-width="3" fill="none"/>
<path d="M228 205 q-4 80 4 155" stroke="#0f0f12" stroke-width="3" fill="none"/>
<path d="M128 158 h38 l6 30 q-2 60 -4 116 h-48 q2 -60 4 -116 z" fill="#ebe2e2"/>
<path d="M120 250 l-2 54 h52 l-2 -54 z" fill="#e3dada"/>
<path d="M108 95 q-8 -52 34 -57 q42 0 44 52 l6 70 h-92 z" fill="#6b3e2f"/>
<path d="M127 126 h35 v34 q-17 18 -35 0 z" fill="#d4a28c"/>
<path d="M127 134 q17 20 35 0 v10 q-17 14 -35 0 z" fill="#b07c66" opacity=".8"/>
<path d="M110 95 C104 125 96 150 90 180 C86 205 83 222 87 235 C98 246 114 242 122 229 C130 205 137 186 138 170 C132 160 128 152 126 140 C120 130 114 115 112 95 Z" fill="#84523b"/>
<path d="M184 90 C188 120 194 145 202 172 C208 195 212 215 210 237 C200 250 184 247 174 233 C168 210 163 190 160 172 C163 160 165 150 165 140 C172 130 176 115 177 95 Z" fill="#80503a"/>
<path d="M112 88 q0 -28 30 -33 q32 0 35 33 q2 20 -6 36 q-8 14 -18 19 q-9 4 -19 0 q-10 -5 -17 -19 q-7 -16 -5 -36 z" fill="url(#skin1)"/>
<path d="M111 100 q-8 -50 26 -60 q22 -4 38 10 q-26 -2 -40 10 q-12 10 -16 30 q-2 24 -4 40 z" fill="#7a4937"/>
<path d="M126 57 q22 -12 48 -7 q10 12 11 40 q1 26 3 40 l-7 2 q-5 -26 -5 -44 q-4 -24 -20 -30 q-14 -4 -30 -1 z" fill="#774634"/>
<path d="M124 56 q14 -10 30 -10" stroke="#a06c50" stroke-width="2" fill="none" opacity=".6"/>
</g>
<g filter="url(#b1)">
<path d="M100 160 q-6 30 -8 64" stroke="#9c6548" stroke-width="5" fill="none" opacity=".55"/>
<path d="M194 160 q8 34 10 68" stroke="#9c6548" stroke-width="5" fill="none" opacity=".55"/>
<path d="M116 165 q0 30 -8 66" stroke="#5e3527" stroke-width="4" fill="none" opacity=".5"/>
<path d="M176 165 q2 34 12 70" stroke="#5e3527" stroke-width="4" fill="none" opacity=".5"/>
<path d="M128 170 q2 30 -6 56" stroke="#8f5a42" stroke-width="4" fill="none" opacity=".6"/>
</g>
<g filter="url(#b05)">
<path d="M120 81 q8 -5 17 -2" stroke="#6a4636" stroke-width="2" fill="none" stroke-linecap="round"/>
<path d="M150 79 q9 -3 17 2" stroke="#6a4636" stroke-width="2" fill="none" stroke-linecap="round"/>
<ellipse cx="129" cy="87.500" rx="4.500" ry="2" fill="#e0c8bc"/><circle cx="129" cy="87.500" r="2.100" fill="#4f3828"/>
<ellipse cx="158" cy="87.500" rx="4.500" ry="2" fill="#e0c8bc"/><circle cx="158" cy="87.500" r="2.100" fill="#4f3828"/>
<path d="M123.500 86.500 q5.500 -3.500 11 0" stroke="#4a3028" stroke-width="1.100" fill="none"/>
<path d="M152.500 86.500 q5.500 -3.500 11 0" stroke="#4a3028" stroke-width="1.100" fill="none"/>
<path d="M138 104 q5.500 3.500 11 0" stroke="#b88270" stroke-width="1.500" fill="none"/>
<path d="M132 115 q11 4 22 -1 q-4 5.500 -11 5.500 q-7 0 -11 -4.500 z" fill="#c98680"/>
<path d="M132 115 q11 2.500 22 -1" stroke="#a86a64" stroke-width="1" fill="none"/>
</g>
<g filter="url(#b2)">
<ellipse cx="120" cy="108" rx="5" ry="12" fill="#c99078" opacity=".35"/>
<ellipse cx="169" cy="108" rx="5" ry="14" fill="#b87a66" opacity=".45"/>
<ellipse cx="143" cy="70" rx="14" ry="7" fill="#f0c8b0" opacity=".5"/>
<ellipse cx="206" cy="312" rx="26" ry="12" fill="#4a3c3a" opacity=".6"/>
</g></svg></div>
<h3 class="t md role" style="left:161.8px;top:22.66px;font-size:18px;transform:scaleX(1.05);">Therapist</h3>
<p class="t name" style="left:161.8px;top:49.67px;font-size:12.2px;transform:scaleX(1.04);">Dr. Sarah Matthews</p>
<ul class="tags">
<li class="tag" style="left:162px;top:77.3px;width:53px"><span class="t" style="left:6.9px;top:4.76px;font-size:9.5px;transform:scaleX(1.12);">Therapy</span></li>
<li class="tag" style="left:222px;top:77.3px;width:150px"><span class="t" style="left:6px;top:4.76px;font-size:9.5px;transform:scaleX(1.1);">Cognitive Behavioral Therapy</span></li>
<li class="tag" style="left:162px;top:105.4px;width:113px"><span class="t" style="left:6.9px;top:4.76px;font-size:9.5px;transform:scaleX(1.11);">Anxiety Management</span></li>
<li class="tag" style="left:282px;top:105.4px;width:69.5px"><span class="t" style="left:6px;top:4.76px;font-size:9.5px;transform:scaleX(1.12);">Mindfulness</span></li>
<li class="tag" style="left:162px;top:133.5px;width:91px"><span class="t" style="left:6.9px;top:4.76px;font-size:9.5px;transform:scaleX(1.09);">Grief Counseling</span></li>
</ul>
</article>
<article class="cc" style="left:690px">
<div class="ph"><svg viewBox="19.5 0 250 360" preserveAspectRatio="none"><rect width="289" height="360" fill="#6a7d98"/>
<g filter="url(#b2)">

<rect x="-5" y="55" width="112" height="320" fill="#273549"/>
<rect x="-5" y="55" width="30" height="130" fill="#33465f"/>

<path d="M-5 30 L107 8 L107 80 L-5 44 z" fill="#9db6d6"/>
<path d="M30 28 L100 14 L100 44 L60 54 z" fill="#c4d6ea"/>
<path d="M0 36 L50 28 L74 56 L20 50 z" fill="#b4c8e2"/>
<path d="M60 22 L100 18 L104 30 L70 36 z" fill="#d0deef"/>
<path d="M-5 40 L107 80 L107 86 L-5 47 z" fill="#34445c"/>
<path d="M-5 52 L40 66 L60 70 L-5 58 z" fill="#7f98b8"/>

<path d="M-5 -5 L107 -5 L107 10 L-5 32 z" fill="#7c4a33"/>

<g fill="#7f90ad">
<rect x="31" y="66" width="6" height="120"/><rect x="42" y="68" width="4" height="120"/><rect x="53" y="70" width="5" height="120"/>
<rect x="77" y="78" width="6" height="110"/><rect x="87" y="80" width="4" height="110"/><rect x="96" y="82" width="4" height="110"/>
<rect x="8" y="60" width="4" height="120" fill="#5f7698"/>
</g>
<rect x="14" y="130" width="14" height="40" fill="#9fb0c8" opacity=".6"/>
<rect x="60" y="140" width="12" height="30" fill="#b0bfd4" opacity=".5"/>

<rect x="105" y="-5" width="29" height="200" fill="#5d6879"/>
<rect x="105" y="-5" width="6" height="200" fill="#828c9c"/>
<rect x="124" y="-5" width="10" height="200" fill="#4c5666"/>

<rect x="134" y="-5" width="72" height="100" fill="#a9bbd2"/>
<rect x="134" y="-5" width="26" height="60" fill="#8ea6c4"/>
<rect x="160" y="-5" width="11" height="100" fill="#dce4ee"/>
<rect x="176" y="-5" width="18" height="100" fill="#8b9fbc"/>
<rect x="195" y="-5" width="10" height="100" fill="#66778e"/>
<rect x="134" y="38" width="72" height="4" fill="#d0d8e4"/>

<rect x="206" y="-5" width="50" height="92" fill="#b5bbc5"/>
<rect x="254" y="-5" width="40" height="92" fill="#9aa4b2"/>
<path d="M262 20 L294 10 L294 50 L270 44 z" fill="#4a4c55"/>
<path d="M258 62 L294 52 L294 82 L262 80 z" fill="#5e9c9c"/>
<rect x="254" y="26" width="40" height="3" fill="#d8dee6"/>

<rect x="180" y="86" width="114" height="50" fill="#b3bfd3"/>
<rect x="180" y="100" width="114" height="22" fill="#c9d2e0"/>

<rect x="180" y="136" width="114" height="240" fill="#6b7d96"/>
<rect x="200" y="140" width="30" height="60" fill="#93a4bc"/>
<rect x="236" y="140" width="24" height="60" fill="#56677f"/>
<rect x="262" y="140" width="30" height="60" fill="#8c9db6"/>
<rect x="180" y="136" width="114" height="5" fill="#8797ae"/>
</g>

<g filter="url(#b05)">
<path d="M115 146 q-40 14 -66 32 q-16 14 -22 50 q-6 60 -10 132 h256 q-4 -80 -8 -130 q-6 -38 -24 -52 q-30 -18 -64 -32 z" fill="#948f88"/>
<path d="M50 180 q-10 40 -14 100" stroke="#6f6b66" stroke-width="6" fill="none" opacity=".6"/>
<path d="M240 180 q10 40 16 100" stroke="#6f6b66" stroke-width="6" fill="none" opacity=".6"/>

<path d="M116 140 l60 0 l6 30 l-36 136 l-34 -136 z" fill="#e4e0e3"/>

<path d="M135 166 l18 0 l4 12 l-4 8 l2 120 l-10 12 l-10 -12 l2 -120 l-6 -8 z" fill="#7196bb"/>
<path d="M133 166 l22 0 l3 12 l-6 8 l-14 0 l-7 -8 z" fill="#86a9c9"/>

<path d="M115 146 l-26 26 l14 6 l-10 8 l52 122 l-28 -160 z" fill="#7a7671"/>
<path d="M177 146 l22 28 l-12 6 l10 8 l-52 120 l30 -160 z" fill="#74706b"/>

<path d="M116 142 l18 24 l10 -8 l-16 -20 z" fill="#f0ecee"/>
<path d="M176 142 l-20 24 l-10 -8 l18 -20 z" fill="#ebe7ea"/>

<path d="M124 128 h44 v14 l-22 14 l-22 -14 z" fill="#a47e68"/>

<ellipse cx="112" cy="108" rx="5.500" ry="12" fill="#b38a74"/><ellipse cx="184" cy="108" rx="5" ry="12" fill="#a8806a"/>

<path d="M116 100 q-8 -50 18 -56 q18 -6 36 0 q22 8 16 56 z" fill="#27282c"/>
<path d="M122 54 q10 -10 28 -11 q18 1 28 9 q-28 -6 -56 2 z" fill="#3d3e44"/>
<path d="M117 96 q-2 -20 8 -27 q10 -5 26 -5 q14 0 24 5 q8 7 7 27 q0 22 -6 34 q-10 16 -26 19 q-16 -3 -26 -19 q-6 -12 -7 -34 z" fill="url(#skin3)"/>
<path d="M117 98 q-1 -18 6 -27 l3 6 q-4 8 -5 22 z" fill="#3a3230" opacity=".8"/>
<path d="M183 98 q1 -18 -6 -27 l-3 6 q4 8 5 22 z" fill="#3a3230" opacity=".8"/>
<path d="M117 110 q2 22 10 30 q10 10 21 10 q12 0 22 -10 q8 -8 10 -30 q-6 14 -12 16 q-8 -8 -20 -8 q-12 0 -20 8 q-6 -2 -11 -16 z" fill="#4a3a33" opacity=".85"/>
<path d="M134 120 q14 -8 28 0 l2 6 q-16 -6 -32 0 z" fill="#33261f"/>
<path d="M140 128 q8 3 16 0 l-2 4 q-6 2 -12 0 z" fill="#a8786a"/>
</g>
<g filter="url(#b05)">
<path d="M124 88 q9 -5 19 -1" stroke="#2c2420" stroke-width="2.500" fill="none" stroke-linecap="round"/>
<path d="M155 87 q10 -4 19 1" stroke="#2c2420" stroke-width="2.500" fill="none" stroke-linecap="round"/>
<ellipse cx="133" cy="95" rx="5" ry="2.200" fill="#3a2a24"/><ellipse cx="164" cy="95" rx="5" ry="2.200" fill="#3a2a24"/>
<path d="M142 112 q6 4 13 0" stroke="#8a6450" stroke-width="1.800" fill="none"/>
</g>
<g filter="url(#b3)">
<ellipse cx="123" cy="105" rx="5" ry="12" fill="#9a7560" opacity=".5"/>
<ellipse cx="150" cy="78" rx="16" ry="7" fill="#d8b098" opacity=".5"/>
<ellipse cx="146" cy="316" rx="24" ry="12" fill="#8a6a58" opacity=".7"/>
</g></svg></div>
<h3 class="t md role" style="left:161.8px;top:22.66px;font-size:18px;transform:scaleX(1.05);">Financial Advisor</h3>
<p class="t name" style="left:161.8px;top:49.67px;font-size:12.2px;transform:scaleX(1.03);">Alex Porter</p>
<ul class="tags">
<li class="tag" style="left:162px;top:77.3px;width:96.5px"><span class="t" style="left:6.9px;top:4.76px;font-size:9.5px;transform:scaleX(1.08);">Financial Planning</span></li>
<li class="tag" style="left:266px;top:77.3px;width:62.5px"><span class="t" style="left:6.5px;top:4.76px;font-size:9.5px;transform:scaleX(1.15);">Budgeting</span></li>
<li class="tag" style="left:335px;top:77.3px;width:71px"><span class="t" style="left:6.5px;top:4.76px;font-size:9.5px;transform:scaleX(1.13);">Investments</span></li>
<li class="tag" style="left:162px;top:105.4px;width:115.5px"><span class="t" style="left:6.9px;top:4.76px;font-size:9.5px;transform:scaleX(1.11);">Retirement Strategies</span></li>
<li class="tag" style="left:284.5px;top:105.4px;width:100.5px"><span class="t" style="left:6.5px;top:4.76px;font-size:9.5px;transform:scaleX(1.13);">Debt Management</span></li>
</ul>
<p class="t cdesc" style="left:161.8px;top:142.55px;font-size:14px;transform:scaleX(1.03);">I'm Alex Porter, a financial advisor</p>
</article>
<article class="cc" style="left:1140px">
<div class="ph"><svg viewBox="0 0 150 216" preserveAspectRatio="none"><rect width="150" height="216" fill="#b7d2ec"/>
<g filter="url(#b1)">
<rect x="-5" y="-5" width="160" height="30" fill="#a4c4e6"/>
<rect x="100" y="-5" width="60" height="70" fill="#cfe3f2"/>

<rect x="18" y="20" width="120" height="56" fill="#dfe7f0"/>
<g stroke="#b9cbe0" stroke-width="1.200">
<path d="M18 30 h120 M18 40 h120 M18 50 h120 M18 60 h120 M18 70 h120"/>
<path d="M28 20 v56 M40 20 v56 M52 20 v56 M64 20 v56 M76 20 v56 M88 20 v56 M100 20 v56 M112 20 v56 M124 20 v56"/>
</g>

<rect x="42" y="42" width="72" height="50" fill="#2b3d5c"/>
<rect x="47" y="47" width="62" height="45" fill="#4d7ab0"/>

<rect x="-5" y="69" width="44" height="8" fill="#8a5c40"/>
<rect x="118" y="69" width="40" height="8" fill="#8a5c40"/>
<rect x="-5" y="64" width="44" height="5" fill="#e6dcd0"/>
<rect x="118" y="64" width="40" height="5" fill="#e6dcd0"/>
<rect x="38" y="70" width="4" height="40" fill="#eef0f2"/>
<rect x="114" y="70" width="4" height="40" fill="#eef0f2"/>

<rect x="-5" y="77" width="44" height="50" fill="#6e9ecb"/>
<rect x="118" y="77" width="40" height="50" fill="#7fabd4"/>
<rect x="-5" y="90" width="44" height="12" fill="#8fb8dc"/>
<rect x="118" y="96" width="40" height="10" fill="#9cc0e0"/>
<rect x="-5" y="120" width="160" height="30" fill="#cfd4d8"/>
<rect x="-5" y="126" width="160" height="8" fill="#e0c8b0"/>
<ellipse cx="8" cy="148" rx="14" ry="10" fill="#3f5d34"/>
<ellipse cx="145" cy="150" rx="10" ry="8" fill="#4a6a3c"/>
</g>
<g filter="url(#b05)">

<path d="M50 60 q-4 -34 24 -37 q30 0 32 34 q4 20 4 36 q2 14 -4 28 l-58 0 q-8 -14 -4 -28 q4 -16 6 -33 z" fill="#c6a269"/>

<path d="M48 94 q-18 6 -26 14 q-6 10 -8 40 l-2 70 h128 l-4 -74 q-2 -26 -10 -36 q-12 -10 -28 -14 l-24 10 z" fill="#b0691f"/>
<path d="M22 110 q-4 40 -6 100" stroke="#8a4c12" stroke-width="3" fill="none" opacity=".6"/>
<path d="M122 110 q6 40 10 100" stroke="#8a4c12" stroke-width="3" fill="none" opacity=".6"/>

<path d="M64 78 h22 v24 l-10 28 l-12 -28 z" fill="#d8ab92"/>

<path d="M68 120 h10 l-2 26 h-6 z" fill="#1c1a1a"/>

<path d="M62 96 l-12 10 l22 60 l-2 -40 z" fill="#9a5814"/>
<path d="M88 96 l14 12 l-28 58 l6 -40 z" fill="#a05c16"/>

<path d="M57 58 q0 -16 17 -18 q18 0 19 18 q0 12 -5 20 q-6 8 -13 8 q-8 0 -13 -8 q-5 -8 -5 -20 z" fill="url(#skin4)"/>

<path d="M52 66 q-2 -38 24 -42 q28 0 30 40 q-4 -14 -12 -22 q-8 -4 -14 -6 q-8 6 -16 10 q-8 6 -12 20 z" fill="#cfac72"/>
<path d="M60 34 q14 -12 30 -4 q-14 0 -30 4 z" fill="#e4c68e"/>

<path d="M54 56 q-6 14 -4 30 q-6 16 -2 32 q6 8 14 2 q4 -14 2 -26 q-6 -10 -6 -24 z" fill="#caa66c"/>
<path d="M96 56 q8 14 6 30 q8 16 4 34 q-8 8 -16 0 q-2 -14 0 -26 q6 -10 6 -24 z" fill="#c29c62"/>
<path d="M52 92 q-2 10 2 22" stroke="#e6c890" stroke-width="2" fill="none" opacity=".7"/>
<path d="M102 92 q4 12 0 24" stroke="#e0c088" stroke-width="2" fill="none" opacity=".7"/>

<path d="M63 54 q4 -2 8 -1" stroke="#9a7a50" stroke-width="1.200" fill="none"/>
<path d="M79 53 q4 -1 8 1" stroke="#9a7a50" stroke-width="1.200" fill="none"/>
<ellipse cx="67" cy="58" rx="2.600" ry="1.200" fill="#4a3a30"/><ellipse cx="83" cy="58" rx="2.600" ry="1.200" fill="#4a3a30"/>
<path d="M72 66 q3 2 6 0" stroke="#c08a78" stroke-width="1" fill="none"/>
<path d="M69 72 q6 3 12 0 q-2 3 -6 3 q-4 0 -6 -3 z" fill="#c8706c"/>
</g></svg></div>
<h3 class="t md role" style="left:161.8px;top:22.66px;font-size:18px;transform:scaleX(1.09);">Nutritionist</h3>
<p class="t name" style="left:161.8px;top:49.67px;font-size:12.2px;">Mia Collins</p>
<ul class="tags">
<li class="tag" style="left:162px;top:77.3px;width:54px"><span class="t" style="left:6.5px;top:4.76px;font-size:9.5px;transform:scaleX(1.16);">Nutrition</span></li>
<li class="tag" style="left:223px;top:77.3px;width:82px"><span class="t" style="left:6.5px;top:4.76px;font-size:9.5px;transform:scaleX(1.12);">Healthy Eating</span></li>
<li class="tag" style="left:312px;top:77.3px;width:78.5px"><span class="t" style="left:6.5px;top:4.76px;font-size:9.5px;transform:scaleX(1.09);">Meal Planning</span></li>
<li class="tag" style="left:162px;top:105.4px;width:82px"><span class="t" style="left:6.5px;top:4.76px;font-size:9.5px;transform:scaleX(1.14);">Dietary Advice</span></li>
<li class="tag" style="left:251px;top:105.4px;width:55.5px"><span class="t" style="left:6.5px;top:4.76px;font-size:9.5px;transform:scaleX(1.11);">Wellness</span></li>
</ul>
<p class="t cdesc" style="left:161.8px;top:142.55px;font-size:14px;transform:scaleX(0.98);">I'm Mia Collins, your nutritionist and</p>
</article>
</div>
</main>
<button id="fb"><span class="t" style="left:14.7px;top:11.2px;font-size:14.3px;transform:scaleX(1.04);">Share feedback</span></button>
</body>
</html>
